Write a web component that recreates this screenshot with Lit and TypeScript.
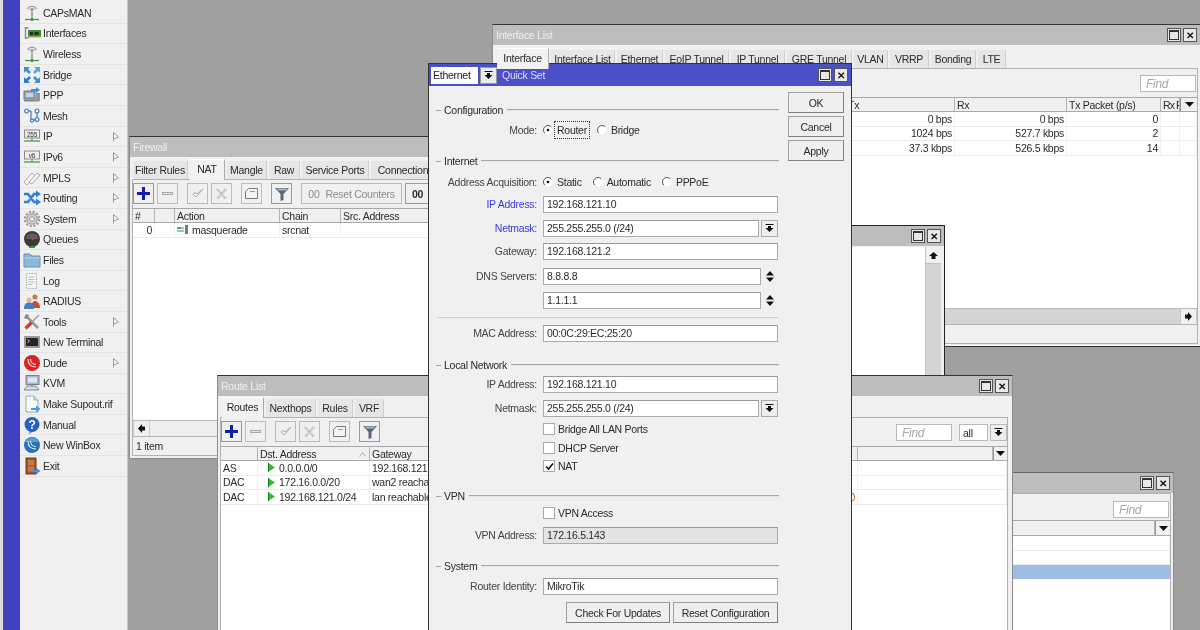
import { LitElement, html, svg, css, nothing } from 'lit';
import { customElement } from 'lit/decorators.js';

// menu icons, 18x18 box
const ico = (inner: unknown) => html`<svg class="ico" viewBox="0 0 18 18" width="18" height="18">${inner}</svg>`;

const antenna = svg`<path d="M4.5 5a5 5 0 0 1 9 0M6.5 6a3 3 0 0 1 5 0" fill="none" stroke="#9a9a9a" stroke-width="1.1"/><path d="M9 5v10" stroke="#8a8a8a" stroke-width="1.4"/><path d="M2 15.5h14" stroke="#2d9a3a" stroke-width="1.2"/><circle cx="9" cy="15.5" r="1.5" fill="#2d9a3a"/>`;

const ICONS: Record<string, unknown> = {
  caps: ico(antenna),
  wireless: ico(antenna),
  interfaces: ico(svg`<path d="M2.5 3v12M2.5 4h3M2.5 14h3" stroke="#8a8a8a" stroke-width="1.4" fill="none"/><rect x="5" y="6" width="13" height="7" fill="#3f8a3f"/><path d="M7 8h3v3H7zM11.5 8h4v3h-4z" fill="#15351a"/><path d="M5 13h13" stroke="#d6b23c"/>`),
  bridge: ico(svg`<g fill="#3f8fd8"><path d="M1 1h6L5 3l3 3-2 2-3-3-2 2z"/><path d="M17 1h-6l2 2-3 3 2 2 3-3 2 2z" fill="#5aa5e8"/><path d="M1 17h6l-2-2 3-3-2-2-3 3-2-2z" fill="#2f7cc8"/><path d="M17 17h-6l2-2-3-3 2-2 3 3 2-2z"/></g>`),
  ppp: ico(svg`<rect x="1" y="5" width="11" height="8" fill="#98a6b0" stroke="#6d7a84"/><rect x="3" y="7" width="7" height="4" fill="#c7d5de"/><path d="M1 14.5h15" stroke="#7c8890" stroke-width="2"/><path d="M8 3h5V1l4 3-4 3V5H8z" fill="#3b8de0"/><rect x="13" y="7" width="4" height="8" fill="#8a97a2"/>`),
  mesh: ico(svg`<path d="M5 4h3v9h4M14 5.5v5" stroke="#555" fill="none"/><g fill="#fff" stroke="#3f88d8" stroke-width="1.3"><circle cx="3.5" cy="4" r="1.9"/><circle cx="14" cy="4" r="1.9"/><circle cx="14" cy="12.5" r="1.9"/><circle cx="9" cy="13.5" r="1.5"/></g>`),
  ip: ico(svg`<rect x="1.5" y="3" width="15" height="8" fill="#eee" stroke="#8a8a8a"/><text x="9" y="9.5" class="ict">255</text><path d="M1 14h16" stroke="#2d9a3a" stroke-width="1.2"/><path d="M9 11v3" stroke="#777"/>`),
  ipv6: ico(svg`<rect x="1.5" y="3" width="15" height="8" fill="#eee" stroke="#8a8a8a"/><text x="9" y="9.5" class="ict">v6</text><path d="M1 14h16" stroke="#2d9a3a" stroke-width="1.2"/><path d="M9 11v3" stroke="#777"/>`),
  mpls: ico(svg`<g fill="#f6f6f6" stroke="#a9a9a9"><path d="M1 13l8-9 3 3-8 9z"/><path d="M6 13l8-9 3 2-8 9z"/></g>`),
  routing: ico(svg`<path d="M1 5h4l6 8h3M1 13h4l6-8h3" fill="none" stroke="#2f80dc" stroke-width="2.6"/><path d="M13 1.5l5 3.5-5 3.5zM13 9.5l5 3.5-5 3.5z" fill="#2f80dc"/>`),
  system: ico(svg`<circle cx="9" cy="9" r="7" fill="none" stroke="#a2a2a2" stroke-width="2.4" stroke-dasharray="2.3 1.4"/><circle cx="9" cy="9" r="5.2" fill="#cfcfcf" stroke="#999"/><circle cx="9" cy="9" r="2.3" fill="#f0f0f0" stroke="#999"/>`),
  queues: ico(svg`<circle cx="9" cy="9" r="8" fill="#3a3a3a"/><path d="M3 9a6 6 0 0 1 12 0z" fill="#5b5b5b"/><path d="M9 10l5-5" stroke="#e03a3a" stroke-width="1.3"/><path d="M6 17h6" stroke="#2d9a3a" stroke-width="2"/>`),
  files: ico(svg`<path d="M1 3h6l2 2h8v11H1z" fill="#8db8dc" stroke="#6d8fab"/><path d="M1 7h16" stroke="#b8d4ea"/>`),
  log: ico(svg`<rect x="3.5" y="1.5" width="10" height="15" fill="#f4f6f4" stroke="#a8b0a8" stroke-dasharray="1.5 1"/><path d="M5.5 5h6M5.5 7.5h6M5.5 10h6M5.5 12.5h4" stroke="#b4c4b4"/>`),
  radius: ico(svg`<circle cx="6" cy="8" r="2.6" fill="#e8b488"/><circle cx="12" cy="5" r="2.6" fill="#c9803f"/><path d="M8 16c0-5 2-7 4-7s5 2 5 7z" fill="#c84a3a"/><path d="M1 17c0-5 2-6.5 5-6.5s5 1.5 5 6.5z" fill="#3f7fc8"/>`),
  tools: ico(svg`<path d="M3 3l12 12" stroke="#9a9a9a" stroke-width="2.6"/><path d="M1 5l2-4 3 1-1 3-2 1z" fill="#8a8a8a"/><path d="M16 2L8 10" stroke="#a0a0a0" stroke-width="1.6"/><path d="M8.5 9.5L2.5 15.5" stroke="#d23a2a" stroke-width="3.2"/>`),
  terminal: ico(svg`<rect x="1" y="3" width="16" height="12" rx="1" fill="#9a9a9a"/><rect x="3" y="5" width="12" height="8" fill="#262626"/><path d="M4.5 6.5l2 1.5-2 1.5" stroke="#ddd" fill="none" stroke-width=".8"/>`),
  dude: ico(svg`<circle cx="9" cy="9" r="8" fill="#d62424"/><path d="M5 5c0 5 3 8 8 8M7.5 5c0 3 2 5.5 5.5 5.5" fill="none" stroke="#f6d6d6" stroke-width="1.2"/>`),
  kvm: ico(svg`<rect x="3" y="1.5" width="13" height="9" fill="#a8b8c8" stroke="#708090"/><rect x="5" y="3.5" width="9" height="5" fill="#dce8f2"/><path d="M1 16l3-4h9l3 4z" fill="#d8dde2" stroke="#7a8a98"/><path d="M9 10.5v2" stroke="#708090"/>`),
  supout: ico(svg`<path d="M3 1h8l4 4v12H3z" fill="#f8fbfd" stroke="#9aa6b0"/><path d="M11 1v4h4" fill="#d8e0e6" stroke="#9aa6b0"/><path d="M8 13h5v-2.5l4.5 3.5-4.5 3.5v-2.5H8z" fill="#4a98e0"/>`),
  manual: ico(svg`<circle cx="9" cy="8.5" r="7.5" fill="#2760c4"/><path d="M7 15l-1 3 4-3z" fill="#2760c4"/><text x="9" y="12.5" class="icq">?</text>`),
  winbox: ico(svg`<circle cx="9" cy="9" r="8" fill="#2a6fb8"/><path d="M2 6a8 8 0 0 1 14 0z" fill="#5c9ad6"/><path d="M5 5c0 5 3 8 8 8M7.5 5c0 3 2 5.5 5.5 5.5" fill="none" stroke="#e4effa" stroke-width="1.1"/>`),
  exit: ico(svg`<rect x="3" y="1" width="10" height="16" fill="#a8552a" stroke="#6f3a1c"/><rect x="5" y="3" width="6" height="5" fill="#c87a44"/><rect x="5" y="9.5" width="6" height="5" fill="#c87a44"/><path d="M8 13h5v-2.5l4.5 3.5-4.5 3.5V15H8z" fill="#3f90e0"/>`),
};

const MENU: [string, string, boolean?][] = [
  ['CAPsMAN', 'caps'], ['Interfaces', 'interfaces'], ['Wireless', 'wireless'], ['Bridge', 'bridge'],
  ['PPP', 'ppp'], ['Mesh', 'mesh'], ['IP', 'ip', true], ['IPv6', 'ipv6', true], ['MPLS', 'mpls', true],
  ['Routing', 'routing', true], ['System', 'system', true], ['Queues', 'queues'], ['Files', 'files'],
  ['Log', 'log'], ['RADIUS', 'radius'], ['Tools', 'tools', true], ['New Terminal', 'terminal'],
  ['Dude', 'dude', true], ['KVM', 'kvm'], ['Make Supout.rif', 'supout'], ['Manual', 'manual'],
  ['New WinBox', 'winbox'], ['Exit', 'exit'],
];

type Tab = [string, number];

const dropGlyph = html`<svg viewBox="0 0 9 9" width="9" height="9"><path d="M0.5 0.5h8" stroke="#111"/><path d="M3 2h3v2h2.5L4.5 8 .5 4H3z" fill="#111"/></svg>`;
const spinGlyph = html`<svg viewBox="0 0 8 11" width="8" height="11"><path d="M4 0l4 4.500H0zM4 11L0 6.500h8z" fill="#111"/></svg>`;
const caret = html`<svg viewBox="0 0 9 5" width="9" height="5"><path d="M0 0h9L4.5 5z" fill="#111"/></svg>`;
const flag = html`<svg viewBox="0 0 7 9" width="7" height="9"><path d="M.5 0v9" stroke="#1a7a1a"/><path d="M1 .5L7 4.5 1 8.5z" fill="#2cc02c"/></svg>`;

const radio = (on: boolean) => html`<svg class="radio" viewBox="0 0 12 12" width="12" height="12"><circle cx="6" cy="6" r="4.5" fill="#fff"/><path d="M2.8 9.2A4.5 4.5 0 0 1 9.2 2.8" stroke="#555" fill="none"/>${on ? svg`<circle cx="6" cy="6" r="1.3" fill="#111"/>` : nothing}</svg>`;

@customElement('app-root')
export class AppRoot extends LitElement {
  static styles = css`
    :host {
      display: block;
      position: relative;
      width: 1200px;
      height: 630px;
      overflow: hidden;
      background: #a0a0a0;
      font: 10.5px "Liberation Sans", Arial, sans-serif;
      letter-spacing: -0.27px;
      color: #2a2a2a;
      filter: blur(0.3px);
    }
    .ict { font: 6.5px "Liberation Sans", sans-serif; fill: #333; text-anchor: middle; }
    .icq { font: bold 12px "Liberation Sans", sans-serif; fill: #fff; text-anchor: middle; }

    /* left menu */
    .strip { position: absolute; left: 0; top: 0; bottom: 0; width: 127px; border-left: 3px solid #dcdcdc; background: #4040c0; box-sizing: border-box; }
    .menu { margin-left: 17px; width: 107px; height: 100%; background: #f0f0f0; border-right: 1px solid #c8c8c8; padding-top: 3px; }
    .mi { display: flex; align-items: center; height: 20.6px; box-sizing: border-box; padding-left: 3px; border-bottom: 1px solid #e4e4e4; position: relative; }
    .mi .ico { flex: none; margin-right: 2px; }
    .mi span { white-space: nowrap; }
    .mi .more { position: absolute; left: 93px; top: 5px; width: 6px; height: 10px; }

    /* windows */
    .win { position: absolute; display: flex; flex-direction: column; background: #f0f0f0; border: 1px solid #8c8c8c; border-top-color: #333; box-sizing: border-box; }
    .firewall { left: 129px; top: 136px; width: 360px; height: 323px; }
    .iface { left: 492px; top: 24px; width: 709px; height: 323px; border-bottom-color: #333; }
    .mid { left: 620px; top: 225px; width: 325px; height: 170px; border-color: #222; }
    .route { left: 217px; top: 375px; width: 796px; height: 300px; }
    .right { left: 860px; top: 472px; width: 314px; height: 240px; border-top-color: #666; }
    .qs { left: 428px; top: 63px; width: 424px; height: 620px; border-color: #333; }

    .tbar { flex: none; height: 20px; display: flex; align-items: center; background: #bdbdbd; color: #f0f0f0; padding-left: 3px; }
    .tbar .t { flex: 1; }
    .wb { width: 14px; height: 14px; box-sizing: border-box; margin-right: 2px; border: 1px solid #555; background: #e8e8e8; position: relative; display: flex; align-items: center; justify-content: center; font: bold 10px "Liberation Sans", sans-serif; color: #111; }
    .wb.max::before { content: ""; width: 10px; height: 10px; border: 1px solid #333; border-top-width: 2px; box-sizing: border-box; }
    .wb.close { margin-right: 3px; }

    .tabs { flex: none; display: flex; align-items: flex-end; gap: 2px; padding-left: 3px; height: 22px; }
    .iface .tabs { height: 23px; padding-left: 4px; }
    .route .tabs { height: 21px; padding-left: 4px; }
    .tab { height: 18px; display: flex; align-items: center; justify-content: center; background: #e6e6e6; border-right: 1px solid #cfcfcf; box-sizing: border-box; white-space: nowrap; overflow: hidden; }
    .tab.on { height: 21px; background: #f2f2f2; border-top: 1px solid #fff; border-right: 1px solid #aaa; margin-bottom: -1px; position: relative; z-index: 1; padding-bottom: 3px; }

    .panel { flex: 1; min-height: 0; display: flex; flex-direction: column; margin: 0 2px 2px; border: 1px solid #b2b2b2; }
    .route .panel { margin-right: 4px; }
    .tools { flex: none; height: 28px; box-sizing: border-box; padding-bottom: 1px; display: flex; align-items: center; gap: 3px; position: relative; }
    .right .tools { height: 26px; padding: 5px 0 0; align-items: flex-start; }
    .tools .grow { flex: 1; }
    .tb { width: 21px; height: 21px; box-sizing: border-box; border: 1px solid #9a9a9a; background: #f0f0f0; display: flex; align-items: center; justify-content: center; flex: none; }
    .tb.off { border-color: #bbb; }
    .tb.sp { margin-left: 6px; }
    .tb.wide { width: 101px; gap: 6px; color: #8c8c8c; margin-left: 6px; }
    .tb.dbl { width: 60px; font-weight: bold; justify-content: flex-start; padding-left: 6px; }
    .find { width: 56px; height: 17px; box-sizing: border-box; background: #fff; border: 1px solid #b8b8b8; color: #a8a8a8; font-style: italic; font-size: 12px; padding-left: 5px; display: flex; align-items: center; flex: none; margin: 2px 1px 0 0; }
    .allsel { width: 29px; height: 17px; box-sizing: border-box; background: #fff; border: 1px solid #b8b8b8; padding-left: 3px; margin: 2px 0 0 3px; flex: none; display: flex; align-items: center; }
    .alldrop { width: 17px; height: 17px; box-sizing: border-box; background: #eee; border: 1px solid #bbb; flex: none; display: flex; align-items: center; justify-content: center; margin: 2px 0 0 -1px; }

    .table { flex: 1; min-height: 0; background: #fff; overflow: hidden; }
    .hrow, .row { display: grid; }
    .hrow { height: 15px; background: #f0f0f0; border-top: 1px solid #a8a8a8; border-bottom: 1px solid #a8a8a8; box-sizing: border-box; }
    .right .hrow { height: 16px; }
    .hrow > div { border-right: 1px solid #b4b4b4; padding-left: 2px; display: flex; align-items: center; white-space: nowrap; overflow: hidden; position: relative; }
    .hrow .drop { justify-content: center; padding: 0; border-right: 0; border-left: 1px solid #999; }
    .row { height: 14.5px; box-sizing: border-box; border-bottom: 1px solid #ebebeb; align-items: center; }
    .row > div { height: 100%; border-right: 1px solid #f0f0f0; padding: 0 2px; display: flex; align-items: center; gap: 4px; white-space: nowrap; overflow: hidden; box-sizing: border-box; }
    .row .r { justify-content: flex-end; }
    .row.sel { background: #9dbde8; border-bottom-color: #fff; }
    .row.sel > div { border-color: #9dbde8; }
    .sort { position: absolute; right: 3px; top: 5px; }
    .tight { letter-spacing: -0.9px; }
    .clip0 { margin-left: auto; color: #a06030; }

    .hscroll { flex: none; height: 17px; box-sizing: border-box; display: flex; background: #d4d4d4; border-top: 1px solid #bbb; border-bottom: 1px solid #b4b4b4; }
    .firewall .hscroll { background: #efefef; }
    .sbtn { width: 15px; background: #f0f0f0; display: flex; align-items: center; justify-content: center; border-left: 1px solid #ccc; border-right: 1px solid #ccc; flex: none; }
    .hscroll .g { flex: 1; }
    .status { flex: none; height: 18px; display: flex; align-items: center; padding-left: 3px; background: #f0f0f0; }
    .midbody { flex: 1; display: flex; background: #fff; margin: 1px 3px 0 0; }
    .midbody .g { flex: 1; }
    .vscroll { width: 15px; background: #d4d4d4; border-left: 1px solid #c4c4c4; }
    .vscroll .up { height: 16px; background: #f0f0f0; display: flex; align-items: center; justify-content: center; border-bottom: 1px solid #c4c4c4; }

    /* quick set */
    .qs .tbar { height: 22px; background: #4b4fc8; color: #dcdcff; padding-left: 2px; }
    .mode { width: 47px; height: 17px; box-sizing: border-box; background: #fff; color: #222; display: flex; align-items: center; padding-left: 2px; flex: none; }
    .modedrop { width: 17px; height: 17px; margin: 0 5px 0 2px; box-sizing: border-box; background: #ececec; border: 1px solid #999; display: flex; align-items: center; justify-content: center; flex: none; }
    .qsbody { flex: 1; display: flex; align-items: flex-start; }
    .form { width: 343px; margin-left: 7px; padding-top: 17px; flex: none; display: flex; flex-direction: column; }
    .side { display: flex; flex-direction: column; gap: 3px; margin-left: 9px; padding-top: 6px; }
    .btn { height: 21px; box-sizing: border-box; border: 1px solid #a0a0a0; border-bottom-color: #808080; border-right-color: #808080; background: #efefef; display: flex; align-items: center; justify-content: center; }
    .side .btn { width: 56px; }
    .head { height: 14px; display: flex; align-items: center; gap: 3px; }
    .head::before { content: ""; width: 5px; border-top: 1px solid #a6a6a6; }
    .head::after { content: ""; flex: 1; margin-left: 1px; border-top: 1px solid #a8a8a8; border-bottom: 1px solid #e4e4e4; }
    .frow { height: 18px; display: flex; align-items: center; }
    .lab { width: 101px; margin-right: 6px; text-align: right; flex: none; white-space: nowrap; color: #444; }
    .lab.blue { color: #3a3ae0; }
    .in { flex: 1; height: 17px; box-sizing: border-box; background: #fff; border: 1px solid #aaa; border-top-color: #999; padding-left: 3px; display: flex; align-items: center; max-width: 235px; }
    .in.dis { background: #e4e4e4; }
    .in.mask { max-width: 216px; flex: none; width: 216px; }
    .in.dns { max-width: 218px; flex: none; width: 218px; }
    .mdrop { width: 17px; height: 17px; box-sizing: border-box; margin-left: 2px; background: #eee; border: 1px solid #aaa; display: flex; align-items: center; justify-content: center; flex: none; }
    .spin { width: 17px; display: flex; align-items: center; justify-content: center; flex: none; }
    .radios { display: flex; align-items: center; margin-left: -1px; }
    .radios .radio { margin-right: 3px; flex: none; }
    .radios span { margin-right: 10px; }
    .radios .focus { outline: 1px dotted #333; outline-offset: 2px; margin-right: 9px; }
    .cb { width: 12px; height: 12px; box-sizing: border-box; border: 1px solid #aaa; background: #fff; margin-right: 3px; display: flex; align-items: center; justify-content: center; }
    .hr { height: 2px; margin: 0 1px; border-top: 1px solid #cdcdcd; box-sizing: border-box; }
    .foot { height: 21px; display: flex; justify-content: flex-end; gap: 3px; margin-right: 1px; }
    .foot .btn.a { width: 104px; }
    .foot .btn.b { width: 105px; }
  `;

  winBtns() {
    return html`<span class="wb max"></span><span class="wb close">✕</span>`;
  }

  tabs(list: Tab[], active: number) {
    return html`<div class="tabs">${list.map(([t, w], i) =>
      html`<div class="tab ${i === active ? 'on' : ''}" style="width:${w}px">${t}</div>`)}</div>`;
  }

  toolbar(extra: unknown = nothing) {
    return html`<div class="tools">
      <div class="tb"><svg viewBox="0 0 13 13" width="13" height="13"><path d="M5 0h3v5h5v3H8v5H5V8H0V5h5z" fill="#0c1fb0"/></svg></div>
      <div class="tb off"><svg viewBox="0 0 11 3" width="11" height="3"><rect x=".5" y=".5" width="10" height="2" fill="#e4e4e4" stroke="#a8a8a8"/></svg></div>
      <div class="tb off sp"><svg viewBox="0 0 12 11" width="12" height="11"><path d="M1 6l3 3 7-8-6 5-2-1.5z" fill="#f8f8f8" stroke="#a8a8a8"/></svg></div>
      <div class="tb off"><svg viewBox="0 0 11 12" width="11" height="12"><path d="M1 1l9 10M10 1L1 11" stroke="#bdbdbd" stroke-width="2.5" stroke-dasharray="1.5 .7"/></svg></div>
      <div class="tb off sp"><svg viewBox="0 0 13 11" width="13" height="11"><path d="M3.5.5h9v10H.5V3.5z" fill="#f4f4f4" stroke="#777"/><path d="M5 3.5h5" stroke="#999"/></svg></div>
      <div class="tb sp"><svg viewBox="0 0 14 14" width="14" height="14"><path d="M0 1h14L8.5 7v6l-3 1V7z" fill="#56687a"/><path d="M1.5 1.5h11l-2 2h-7z" fill="#aab6c2"/></svg></div>
      ${extra}
    </div>`;
  }

  hrow(cols: string, cells: unknown[]) {
    return html`<div class="hrow" style="grid-template-columns:${cols}">${cells.map((c) =>
      c === caret ? html`<div class="drop">${caret}</div>` : html`<div>${c}</div>`)}</div>`;
  }

  row(cols: string, cells: unknown[], right: number[] = [], sel = false) {
    return html`<div class="row ${sel ? 'sel' : ''}" style="grid-template-columns:${cols}">${cells.map((c, i) =>
      html`<div class=${right.includes(i) ? 'r' : ''}>${c}</div>`)}</div>`;
  }

  head(label: string, gap: number) {
    return html`<div class="head" style="margin-top:${gap}px"><span>${label}</span></div>`;
  }

  frow(label: string, gap: number, field: unknown, blue = false) {
    return html`<div class="frow" style="margin-top:${gap}px">
      <div class="lab ${blue ? 'blue' : ''}">${label}</div>${field}
    </div>`;
  }

  checkRow(label: string, gap: number, on = false) {
    return this.frow('', gap, html`<div class="cb">${on ? html`<svg viewBox="0 0 9 9" width="9" height="9"><path d="M1 4.5l2.5 2.5L8 1.5" fill="none" stroke="#111" stroke-width="1.6"/></svg>` : nothing}</div><span>${label}</span>`);
  }

  renderFirewall() {
    const cols = '22px 20px 105px 61px 1fr';
    return html`<section class="win firewall">
      <div class="tbar"><span class="t">Firewall</span></div>
      ${this.tabs([['Filter Rules', 55], ['NAT', 35], ['Mangle', 40], ['Raw', 31], ['Service Ports', 67], ['Connections', 70]], 1)}
      <div class="panel">
        ${this.toolbar(html`<div class="tb wide off"><span>00</span><span>Reset Counters</span></div><div class="tb dbl">00</div>`)}
        <div class="table">
          ${this.hrow(cols, ['#', '', 'Action', 'Chain', 'Src. Address'])}
          ${this.row(cols, ['0', '', html`<svg viewBox="0 0 11 9" width="11" height="9"><path d="M0 3h7M0 6h7" stroke="#2a9a3a"/><path d="M0 3h4" stroke="#2a50d0"/><rect x="8" y="0" width="3" height="9" fill="#777"/></svg><span>masquerade</span>`, 'srcnat', ''], [0])}
        </div>
        <div class="hscroll"><div class="sbtn"><svg viewBox="0 0 7 9" width="7" height="9"><path d="M0 4.5L4 0v2.5h3v4H4V9z" fill="#111"/></svg></div><div class="g"></div></div>
        <div class="status">1 item</div>
      </div>
    </section>`;
  }

  renderIface() {
    const cols = '350px 109px 112px 94px 19px 1fr';
    return html`<section class="win iface">
      <div class="tbar"><span class="t">Interface List</span>${this.winBtns()}</div>
      ${this.tabs([['Interface', 52], ['Interface List', 64], ['Ethernet', 46], ['EoIP Tunnel', 64], ['IP Tunnel', 54], ['GRE Tunnel', 65], ['VLAN', 34], ['VRRP', 39], ['Bonding', 45], ['LTE', 28]], 0)}
      <div class="panel">
        <div class="tools"><span class="grow"></span><div class="find">Find</div></div>
        <div class="table">
          ${this.hrow(cols, ['', 'Tx', 'Rx', 'Tx Packet (p/s)', html`<span class="tight">Rx P</span>`, caret])}
          ${this.row(cols, ['', '0 bps', '0 bps', '0', '', ''], [1, 2, 3])}
          ${this.row(cols, ['', '1024 bps', '527.7 kbps', '2', '', ''], [1, 2, 3])}
          ${this.row(cols, ['', '37.3 kbps', '526.5 kbps', '14', '', ''], [1, 2, 3])}
        </div>
        <div class="hscroll"><div class="g"></div><div class="sbtn"><svg viewBox="0 0 7 9" width="7" height="9"><path d="M7 4.5L3 0v2.5H0v4h3V9z" fill="#111"/></svg></div></div>
        <div class="status"></div>
      </div>
    </section>`;
  }

  renderMid() {
    return html`<section class="win mid">
      <div class="tbar"><span class="t"></span>${this.winBtns()}</div>
      <div class="midbody">
        <div class="g"></div>
        <div class="vscroll"><div class="up"><svg viewBox="0 0 9 7" width="9" height="7"><path d="M4.5 0L9 4H6.5v3h-4V4H0z" fill="#111"/></svg></div></div>
      </div>
    </section>`;
  }

  renderRoute() {
    const head = '37px 112px 488px 135px 1fr';
    const cols = '37px 112px 488px 1fr';
    return html`<section class="win route">
      <div class="tbar"><span class="t">Route List</span>${this.winBtns()}</div>
      ${this.tabs([['Routes', 42], ['Nexthops', 50], ['Rules', 35], ['VRF', 29]], 0)}
      <div class="panel">
        ${this.toolbar(html`<span class="grow"></span><div class="find">Find</div><div class="allsel">all</div><div class="alldrop">${dropGlyph}</div>`)}
        <div class="table">
          ${this.hrow(head, ['', html`Dst. Address<svg class="sort" viewBox="0 0 7 5" width="7" height="5"><path d="M.5 4.5L3.5.5l3 4" fill="none" stroke="#aaa"/></svg>`, 'Gateway', '', caret])}
          ${this.row(cols, ['AS', html`<span style="width:4px"></span>${flag}<span>0.0.0.0/0</span>`, '192.168.121.2', ''])}
          ${this.row(cols, ['DAC', html`<span style="width:4px"></span>${flag}<span>172.16.0.0/20</span>`, 'wan2 reachable', ''])}
          ${this.row(cols, ['DAC', html`<span style="width:4px"></span>${flag}<span>192.168.121.0/24</span>`, html`<span>lan reachable</span><span class="clip0">0</span>`, ''])}
        </div>
      </div>
    </section>`;
  }

  renderRight() {
    const head = '1fr 15px';
    const cols = '1fr';
    return html`<section class="win right">
      <div class="tbar"><span class="t"></span>${this.winBtns()}</div>
      <div class="panel">
        <div class="tools"><span class="grow"></span><div class="find">Find</div></div>
        <div class="table">
          ${this.hrow(head, ['', caret])}
          ${this.row(cols, [''])}
          ${this.row(cols, [''])}
          ${this.row(cols, [''], [], true)}
        </div>
      </div>
    </section>`;
  }

  renderQuickSet() {
    return html`<section class="win qs">
      <div class="tbar">
        <div class="mode">Ethernet</div><div class="modedrop">${dropGlyph}</div>
        <span class="t">Quick Set</span>${this.winBtns()}
      </div>
      <div class="qsbody">
        <div class="form">
          ${this.head('Configuration', 0)}
          ${this.frow('Mode:', 4, html`<div class="radios">${radio(true)}<span class="focus">Router</span>${radio(false)}<span>Bridge</span></div>`)}
          ${this.head('Internet', 15)}
          ${this.frow('Address Acquisition:', 5, html`<div class="radios">${radio(true)}<span>Static</span>${radio(false)}<span>Automatic</span>${radio(false)}<span>PPPoE</span></div>`)}
          ${this.frow('IP Address:', 4, html`<div class="in">192.168.121.10</div>`, true)}
          ${this.frow('Netmask:', 6, html`<div class="in mask">255.255.255.0 (/24)</div><div class="mdrop">${dropGlyph}</div>`, true)}
          ${this.frow('Gateway:', 5, html`<div class="in">192.168.121.2</div>`)}
          ${this.frow('DNS Servers:', 7, html`<div class="in dns">8.8.8.8</div><div class="spin">${spinGlyph}</div>`)}
          ${this.frow('', 6, html`<div class="in dns">1.1.1.1</div><div class="spin">${spinGlyph}</div>`)}
          <div class="hr" style="margin-top:8px"></div>
          ${this.frow('MAC Address:', 5, html`<div class="in">00:0C:29:EC:25:20</div>`)}
          ${this.head('Local Network', 16)}
          ${this.frow('IP Address:', 3, html`<div class="in">192.168.121.10</div>`)}
          ${this.frow('Netmask:', 6, html`<div class="in mask">255.255.255.0 (/24)</div><div class="mdrop">${dropGlyph}</div>`)}
          ${this.checkRow('Bridge All LAN Ports', 3)}
          ${this.checkRow('DHCP Server', 1)}
          ${this.checkRow('NAT', 0, true)}
          ${this.head('VPN', 14)}
          ${this.checkRow('VPN Access', 1)}
          ${this.frow('VPN Address:', 4, html`<div class="in dis">172.16.5.143</div>`)}
          ${this.head('System', 15)}
          ${this.frow('Router Identity:', 4, html`<div class="in">MikroTik</div>`)}
          <div class="foot" style="margin-top:7px"><div class="btn a">Check For Updates</div><div class="btn b">Reset Configuration</div></div>
        </div>
        <div class="side"><div class="btn">OK</div><div class="btn">Cancel</div><div class="btn">Apply</div></div>
      </div>
    </section>`;
  }

  render() {
    return html`
      <div class="strip"><nav class="menu">
        ${MENU.map(([label, icon, more]) => html`<div class="mi">${ICONS[icon]}<span>${label}</span>
          ${more ? html`<svg class="more" viewBox="0 0 6 10"><path d="M.5 .5v9M.5 .5l5 4.5-5 2" fill="#f6f6f6" stroke="#999"/></svg>` : nothing}
        </div>`)}
      </nav></div>
      ${this.renderFirewall()}
      ${this.renderIface()}
      ${this.renderMid()}
      ${this.renderRight()}
      ${this.renderRoute()}
      ${this.renderQuickSet()}
    `;
  }
}
